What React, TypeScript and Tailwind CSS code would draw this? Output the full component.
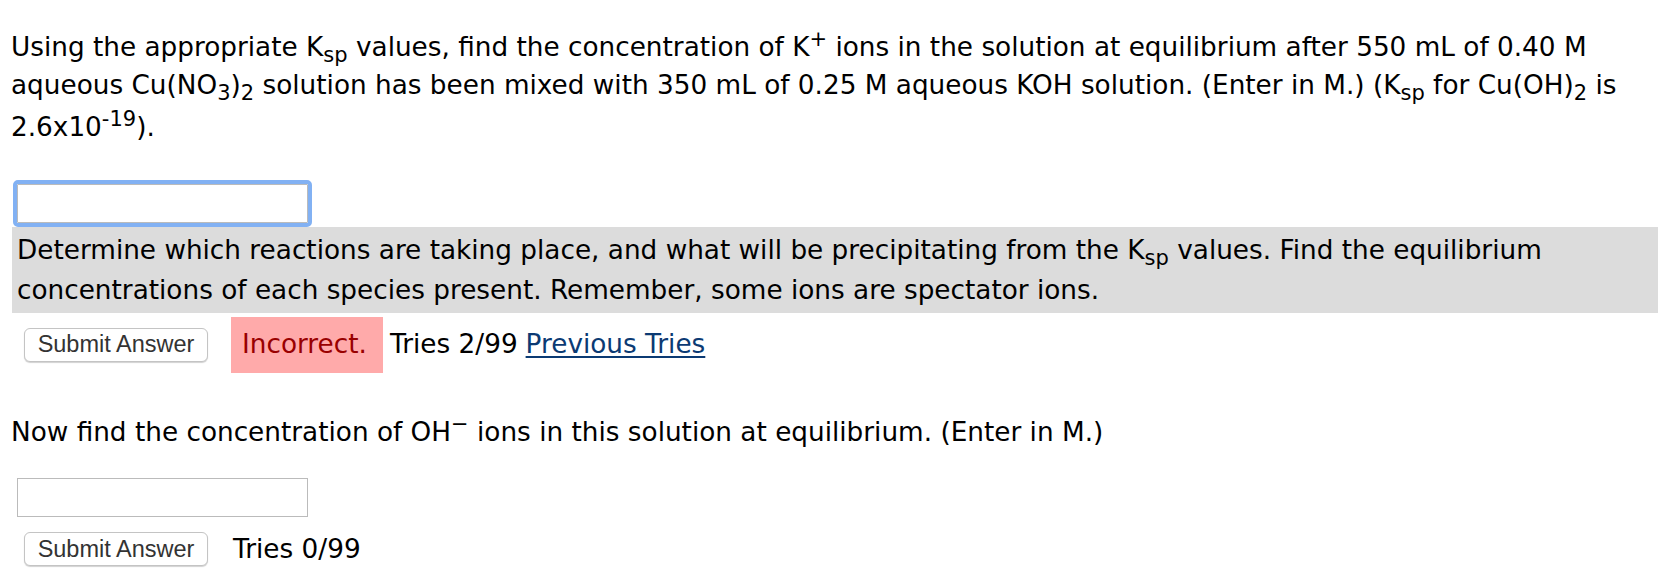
import React from "react";

const Sub = ({ children }: { children: React.ReactNode }) => (
  <span className="relative top-[6px] text-[21px] leading-[0]">{children}</span>
);
const Sup = ({ children }: { children: React.ReactNode }) => (
  <span className="relative top-[-10px] text-[21px] leading-[0]">{children}</span>
);

const SubmitButton = () => (
  <button
    type="button"
    className="ml-[12px] w-[184px] h-[34px] shrink-0 rounded-[6px] border border-[#c4c4c4] bg-white text-[#333333] text-[23.5px] leading-none shadow-[0_1px_1px_rgba(0,0,0,0.18)]"
    style={{ fontFamily: '"Liberation Sans", Arial, sans-serif' }}
  >
    Submit Answer
  </button>
);

export default function App() {
  return (
    <div
      className="w-[1658px] h-[586px] bg-white text-black pl-[12px] pt-[29px] overflow-hidden text-[26.3px]"
      style={{ fontFamily: '"DejaVu Sans", Verdana, sans-serif' }}
    >
      <div className="-ml-px leading-[37.5px] whitespace-nowrap">
        <div>
          Using the appropriate K<Sub>sp</Sub> values, find the concentration of K<Sup>+</Sup> ions in the solution at
          equilibrium after 550 mL of 0.40 M
        </div>
        <div>
          aqueous Cu(NO<Sub>3</Sub>)<Sub>2</Sub> solution has been mixed with 350 mL of 0.25 M aqueous KOH solution. (Enter
          in M.) (K<Sub>sp</Sub> for Cu(OH)<Sub>2</Sub> is
        </div>
        <div className="mt-[5px]">
          2.6x10<Sup>-19</Sup>).
        </div>
      </div>

      <div className="mt-[37px] ml-[5px] w-[291px] h-[39px] border border-[#bbbbbb] bg-white rounded-[1px] outline outline-[4px] outline-[#82b1f3] outline-offset-0" />

      <div className="mt-[4px] bg-[#dcdcdc] pl-[5px] py-[3px] leading-[40px] whitespace-nowrap">
        <div>
          Determine which reactions are taking place, and what will be precipitating from the K<Sub>sp</Sub> values. Find the
          equilibrium
        </div>
        <div>concentrations of each species present. Remember, some ions are spectator ions.</div>
      </div>

      <div className="mt-[4px] flex items-center h-[56px] leading-[37.5px] whitespace-nowrap">
        <SubmitButton />
        <div className="ml-[23px] w-[152px] h-[56px] shrink-0 bg-[#ffaaaa] text-[#990000] pl-[11px] py-[9px] leading-[37.5px]">
          Incorrect.
        </div>
        <span className="ml-[7px]">Tries 2/99</span>
        <a href="#" className="ml-[8px] text-[#0b3a73] underline underline-offset-[3px] decoration-[1.5px]">
          Previous Tries
        </a>
      </div>

      <div className="-ml-px mt-[41px] leading-[37.5px] whitespace-nowrap">
        Now find the concentration of OH<Sup>−</Sup> ions in this solution at equilibrium. (Enter in M.)
      </div>

      <div className="mt-[26.5px] ml-[5px] w-[291px] h-[39px] border border-[#bbbbbb] bg-white" />

      <div className="mt-[14px] flex items-center leading-[37.5px] whitespace-nowrap">
        <SubmitButton />
        <span className="ml-[25px]">Tries 0/99</span>
      </div>
    </div>
  );
}
